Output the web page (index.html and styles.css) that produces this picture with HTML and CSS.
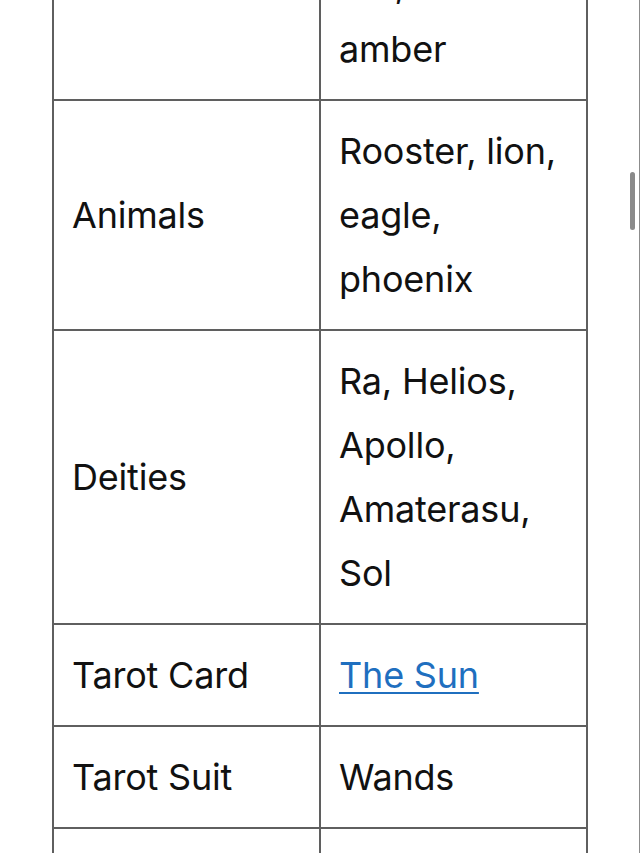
FILE: index.html
```html
<!DOCTYPE html>
<html lang="en">
<head>
<meta charset="utf-8">
<title>Sun correspondences</title>
<link rel="stylesheet" href="styles.css">
</head>
<body>
<div class="viewport">
  <table class="corr">
    <tbody>
      <tr>
        <td>Colors</td>
        <td>Gold, yellow,<br>orange,<br>red,<br>amber</td>
      </tr>
      <tr>
        <td>Animals</td>
        <td>Rooster, lion, eagle, phoenix</td>
      </tr>
      <tr>
        <td>Deities</td>
        <td>Ra, Helios, Apollo, Amaterasu, Sol</td>
      </tr>
      <tr>
        <td>Tarot Card</td>
        <td><a href="#">The Sun</a></td>
      </tr>
      <tr>
        <td>Tarot Suit</td>
        <td>Wands</td>
      </tr>
      <tr>
        <td>Zodiac</td>
        <td>Leo</td>
      </tr>
    </tbody>
  </table>
  <div class="scroll-edge"></div>
  <div class="scroll-thumb"></div>
</div>
</body>
</html>
```
FILE: styles.css
```css
html, body {
  margin: 0;
  padding: 0;
  background: #ffffff;
}
.viewport {
  position: relative;
  width: 640px;
  height: 853px;
  overflow: hidden;
  font-family: "Inter", "Roboto", "Noto Sans", sans-serif;
  color: #111111;
}
.corr {
  border-collapse: collapse;
  margin-left: 52px;
  margin-top: -195px;
  width: 536px;
  table-layout: fixed;
}
.corr td {
  border: 2px solid #5f5f5f;
  padding: 18px 18px;
  font-size: 36px;
  line-height: 64px;
  vertical-align: middle;
  width: 50%;
  letter-spacing: -0.2px;
}
.corr a {
  color: #1f6fbf;
  text-decoration: underline;
  text-decoration-thickness: 2px;
  text-underline-offset: 4px;
}
.scroll-edge {
  position: absolute;
  top: 0;
  right: 0;
  width: 1px;
  height: 853px;
  background: #8c8c8c;
}
.scroll-thumb {
  position: absolute;
  top: 172px;
  left: 630px;
  width: 5px;
  height: 58px;
  border-radius: 3px;
  background: #8a8a8a;
}
```
